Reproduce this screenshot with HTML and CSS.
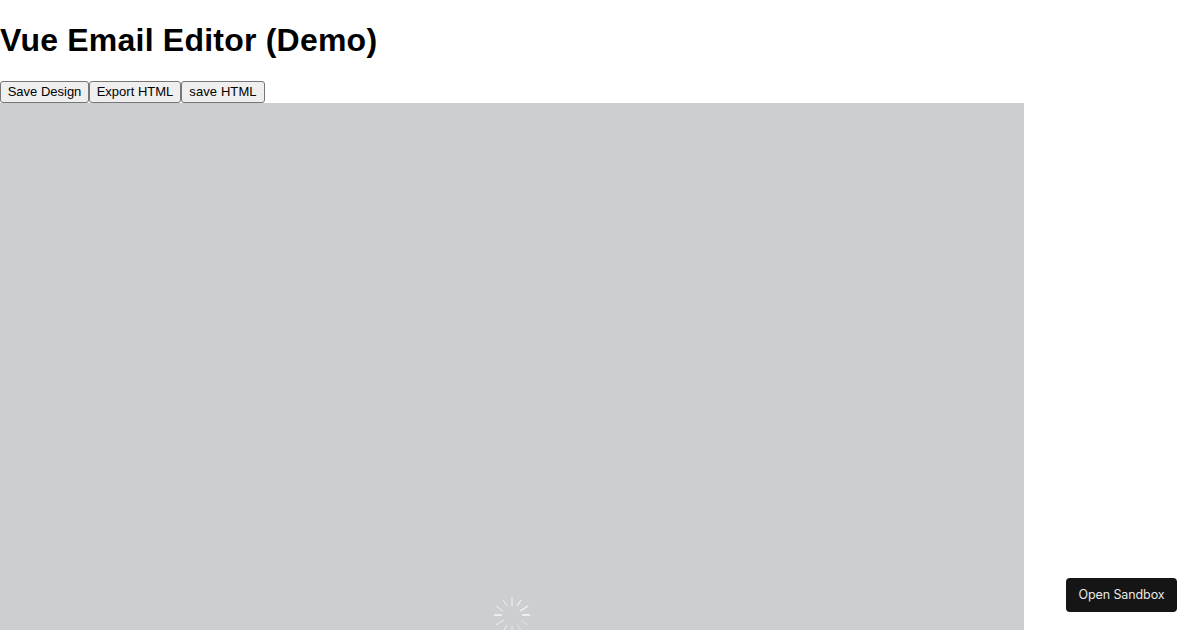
FILE: index.html
```html
<!DOCTYPE html>
<html lang="en">
<head>
    <meta charset="UTF-8">
    <title>Vue Email Editor (Demo)</title>
    <link rel="stylesheet" href="styles.css">
</head>
<body>
    <div id="app">
        <h1>Vue Email Editor (Demo)</h1>
        <div class="actions">
            <button class="save-design">Save Design</button><button class="export-html">Export HTML</button><button class="save-html">save HTML</button>
        </div>
        <div class="editor">
            <svg class="spinner" width="40" height="40" viewBox="0 0 40 40" fill="none" stroke="#fff" stroke-width="1.3">
                <line x1="20" y1="2" x2="20" y2="11" stroke-opacity="0.6"/>
                <line x1="29" y1="5" x2="25" y2="11" stroke-opacity="0.7"/>
                <line x1="36" y1="11" x2="28" y2="16" stroke-opacity="0.8"/>
                <line x1="38" y1="20" x2="30" y2="20"/>
                <line x1="36" y1="30" x2="29" y2="25" stroke-opacity="0.3"/>
                <line x1="29" y1="35" x2="25" y2="30" stroke-opacity="0.3"/>
                <line x1="20" y1="38" x2="20" y2="31" stroke-opacity="0.5"/>
                <line x1="12" y1="35" x2="15" y2="30" stroke-opacity="0.5"/>
                <line x1="4" y1="30" x2="12" y2="25" stroke-opacity="0.5"/>
                <line x1="2" y1="20" x2="10" y2="20" stroke-opacity="0.95"/>
                <line x1="4" y1="11" x2="11" y2="16" stroke-opacity="0.5"/>
                <line x1="11" y1="5" x2="15" y2="11" stroke-opacity="0.5"/>
            </svg>
        </div>
    </div>
    <a class="sandbox-btn" href="#">Open Sandbox</a>
</body>
</html>
```

FILE: styles.css
```css
html, body {
    height: 100%;
    overflow: hidden;
}
body {
    margin: 0;
    background-color: #fff;
    color: #000;
    font-family: "Liberation Sans", Arial, sans-serif;
}
h1 {
    font-size: 32px;
    letter-spacing: 0.22px;
    margin: 21px 0 22px;
    line-height: 38px;
}
.actions {
    display: flex;
    height: 22px;
}
button {
    font-family: "Liberation Sans", Arial, sans-serif;
    font-size: 13px;
    color: #000;
    background-color: #efefef;
    border: 1px solid #767676;
    border-radius: 3px;
    padding: 0 0 2px;
}
.save-design {
    width: 89px;
}
.export-html {
    width: 92px;
}
.save-html {
    width: 84px;
    letter-spacing: 0.1px;
}
.editor {
    position: relative;
    width: 1024px;
    height: 1024px;
    background-color: #cdced2;
}
.spinner {
    position: absolute;
    left: 492px;
    top: 492px;
}
.sandbox-btn {
    position: fixed;
    right: 23px;
    bottom: 18px;
    width: 111px;
    height: 33px;
    padding-bottom: 1px;
    display: flex;
    align-items: center;
    justify-content: center;
    background-color: #151515;
    border-radius: 4px;
    color: #e8e8e8;
    font-family: Inter, sans-serif;
    font-size: 12.5px;
    letter-spacing: -0.1px;
    text-decoration: none;
}
```
